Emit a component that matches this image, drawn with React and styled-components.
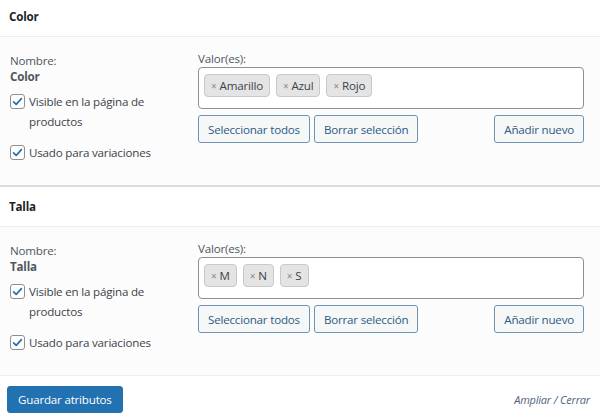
import React from "react";
import styled, { createGlobalStyle } from "styled-components";

const Global = createGlobalStyle`
  html, body { margin: 0; padding: 0; background: #fff; }
  body { font-family: "Open Sans", "Noto Sans", sans-serif; color: #3c434a; font-size: 11.6px; letter-spacing: -0.2px; }
  * { box-sizing: border-box; }
`;

const Page = styled.div`
  width: 600px;
  height: 420px;
  overflow: hidden;
  background: #fff;
  display: flex;
  flex-direction: column;
`;

const Section = styled.section`
  border-bottom: ${(p) => (p.$last ? "1px solid #eee" : "2px solid #dcdcde")};
`;

const Header = styled.h3`
  margin: 0;
  height: ${(p) => p.$h}px;
  padding: 0 9px ${(p) => p.$pb}px;
  display: flex;
  align-items: center;
  font-size: 11.6px;
  font-weight: 700;
  color: #1d2327;
  background: #fff;
  border-bottom: 1px solid #eee;
`;

const Body = styled.div`
  height: 148px;
  background: #fcfcfc;
  display: grid;
  grid-template-columns: 198px 386px;
  padding: 16px 0 0 0;
`;

const Left = styled.div`
  padding-left: 10px;
  display: flex;
  flex-direction: column;
`;

const Label = styled.div`
  line-height: 16px;
  color: #50575e;
`;

const Name = styled.div`
  line-height: 16px;
  font-weight: 700;
  color: #50575e;
`;

const CheckRow = styled.label`
  display: flex;
  align-items: flex-start;
  gap: 4px;
  margin-top: ${(p) => p.$mt}px;
  line-height: 20px;
  color: #3c434a;
`;

const Box = styled.span`
  flex: none;
  width: 15px;
  height: 15px;
  margin-top: 2px;
  border: 1px solid #8c8f94;
  border-radius: 3px;
  background: #fff;
  display: flex;
  align-items: center;
  justify-content: center;
`;

const Right = styled.div`
  display: flex;
  flex-direction: column;
`;

const ValueLabel = styled.div`
  line-height: 14px;
  color: #50575e;
  margin-top: -1px;
`;

const TagBox = styled.div`
  margin-top: 1px;
  height: 42px;
  border: 1px solid #8c8f94;
  border-radius: 4px;
  background: #fff;
  display: flex;
  align-items: flex-start;
  gap: 6px;
  padding: 6px 5px;
`;

const Tag = styled.span`
  height: 23px;
  padding: 0 6px;
  display: flex;
  align-items: center;
  gap: 3px;
  background: #e4e4e4;
  border: 1px solid #c9c9c9;
  border-radius: 4px;
  color: #3c434a;
`;

const X = styled.span`
  color: #888;
  font-size: 10px;
`;

const Buttons = styled.div`
  margin-top: 6px;
  display: flex;
  gap: 4px;
`;

const Button = styled.button`
  height: 28px;
  padding: 0 9px;
  font-family: inherit;
  font-size: 11.6px;
  letter-spacing: -0.2px;
  color: #2c5b85;
  background: #f6f7f7;
  border: 1px solid #6f93b5;
  border-radius: 3px;
  margin-left: ${(p) => (p.$push ? "auto" : "0")};
`;

const Footer = styled.div`
  flex: 1;
  display: flex;
  align-items: flex-start;
  justify-content: space-between;
  padding: 10px 10px 0 7px;
`;

const Primary = styled.button`
  height: 27px;
  padding: 0 10px;
  font-family: inherit;
  font-size: 11.6px;
  letter-spacing: -0.2px;
  color: #fff;
  background: #2271b1;
  border: 1px solid #2271b1;
  border-radius: 3px;
`;

const Link = styled.a`
  margin-top: 6px;
  font-style: italic;
  font-size: 11px;
  color: #50637a;
  text-decoration: none;
`;

const Check = () => (
  <Box>
    <svg width="13" height="13" viewBox="0 0 20 20">
      <path d="M4 10.5l4 4 8-9" fill="none" stroke="#2271b1" strokeWidth="2.6" strokeLinecap="round" strokeLinejoin="round" />
    </svg>
  </Box>
);

const Attribute = ({ title, headerH, headerPb, values, last }) => (
  <Section $last={last}>
    <Header $h={headerH} $pb={headerPb}>{title}</Header>
    <Body>
      <Left>
        <Label>Nombre:</Label>
        <Name>{title}</Name>
        <CheckRow $mt={7}>
          <Check />
          <span>Visible en la página de productos</span>
        </CheckRow>
        <CheckRow $mt={11}>
          <Check />
          <span>Usado para variaciones</span>
        </CheckRow>
      </Left>
      <Right>
        <ValueLabel>Valor(es):</ValueLabel>
        <TagBox>
          {values.map((v) => (
            <Tag key={v}>
              <X>×</X>
              {v}
            </Tag>
          ))}
        </TagBox>
        <Buttons>
          <Button>Seleccionar todos</Button>
          <Button>Borrar selección</Button>
          <Button $push>Añadir nuevo</Button>
        </Buttons>
      </Right>
    </Body>
  </Section>
);

export default function App() {
  return (
    <Page>
      <Global />
      <Attribute title="Color" headerH={37} headerPb={4} values={["Amarillo", "Azul", "Rojo"]} />
      <Attribute title="Talla" headerH={40} headerPb={1} values={["M", "N", "S"]} last />
      <Footer>
        <Primary>Guardar atributos</Primary>
        <Link href="#">Ampliar / Cerrar</Link>
      </Footer>
    </Page>
  );
}
